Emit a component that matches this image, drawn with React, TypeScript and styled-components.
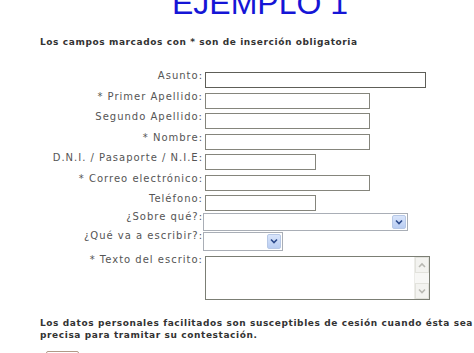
import React from "react";
import styled, { createGlobalStyle } from "styled-components";

const GlobalStyle = createGlobalStyle`
  html, body {
    margin: 0;
    padding: 0;
    background: #ffffff;
    overflow: hidden;
  }
  body {
    font-family: "DejaVu Sans", Verdana, sans-serif;
  }
`;

const Page = styled.div`
  width: 474px;
  height: 353px;
  overflow: hidden;
`;

const Title = styled.h1`
  margin: -13px 0 0 0;
  padding-left: 172px;
  font-family: "Liberation Sans", Arial, sans-serif;
  font-weight: normal;
  font-size: 32px;
  line-height: 32px;
  color: #1515d6;
  white-space: nowrap;
`;

const Note = styled.p<{ $top: number; $width?: number }>`
  margin: ${({ $top }) => $top}px 0 0 40px;
  width: ${({ $width }) => ($width ? `${$width}px` : "auto")};
  font-size: 9px;
  line-height: 12px;
  font-weight: bold;
  letter-spacing: 0.6px;
  color: #333333;
  white-space: ${({ $width }) => ($width ? "normal" : "nowrap")};
`;

const Form = styled.div`
  display: flex;
  flex-direction: column;
  margin-top: 24px;
`;

const Row = styled.div<{ $after: number }>`
  display: grid;
  grid-template-columns: 203px 1fr;
  column-gap: 2px;
  margin-bottom: ${({ $after }) => $after}px;
`;

const Label = styled.label`
  margin-top: -2px;
  text-align: right;
  font-size: 10px;
  line-height: 12px;
  letter-spacing: 1px;
  color: #555555;
  white-space: nowrap;
`;

const TextInput = styled.div<{ $width: number; $dark?: boolean }>`
  box-sizing: border-box;
  width: ${({ $width }) => $width}px;
  height: 16px;
  border: 1px solid ${({ $dark }) => ($dark ? "#5e5e58" : "#85857c")};
  background: #ffffff;
`;

const SelectBox = styled.div<{ $width: number }>`
  box-sizing: border-box;
  display: flex;
  justify-content: flex-end;
  margin-left: -2px;
  width: ${({ $width }) => $width}px;
  height: 18.5px;
  padding: 1px;
  border: 1px solid #a9aeb6;
  background: #ffffff;
`;

const SelectArrow = styled.div`
  box-sizing: border-box;
  display: flex;
  align-items: center;
  justify-content: center;
  width: 14px;
  border: 1px solid #b7c8e6;
  border-radius: 2px;
  background: linear-gradient(#d9e5fb, #b9cdf2);
`;

const TextArea = styled.div`
  box-sizing: border-box;
  display: flex;
  justify-content: flex-end;
  width: 225px;
  height: 44px;
  border: 1px solid #7b7e74;
  background: #ffffff;
`;

const ScrollBar = styled.div`
  display: flex;
  flex-direction: column;
  justify-content: space-between;
  width: 14px;
  background: #f7f7f5;
  border-left: 1px solid #ecece8;
`;

const ScrollButton = styled.div`
  display: flex;
  align-items: center;
  justify-content: center;
  height: 14px;
  border: 1px solid #e2e2dc;
  background: #f3f3f0;
`;

const SubmitButton = styled.div`
  box-sizing: border-box;
  margin: 10px 0 0 46px;
  width: 33px;
  height: 20px;
  border: 1px solid #b19a88;
  border-radius: 2px;
  background: #ffffff;
`;

const Chevron = ({ up, color }: { up?: boolean; color: string }) => (
  <svg width="8" height="6" viewBox="0 0 8 6">
    <path
      d={up ? "M1 5 L4 2 L7 5" : "M1 1.5 L4 4.5 L7 1.5"}
      fill="none"
      stroke={color}
      strokeWidth="1.6"
    />
  </svg>
);

const Select = ({ width }: { width: number }) => (
  <SelectBox $width={width}>
    <SelectArrow>
      <Chevron color="#2c4a8c" />
    </SelectArrow>
  </SelectBox>
);

const fields: { label: string; width: number; after: number; dark?: boolean }[] = [
  { label: "Asunto:", width: 221, after: 4.5, dark: true },
  { label: "* Primer Apellido:", width: 165, after: 4.5 },
  { label: "Segundo Apellido:", width: 165, after: 4.5 },
  { label: "* Nombre:", width: 165, after: 4.5 },
  { label: "D.N.I. / Pasaporte / N.I.E:", width: 111, after: 4.5 },
  { label: "* Correo electrónico:", width: 165, after: 4.5 },
  { label: "Teléfono:", width: 111, after: 1.5 },
];

const App = () => (
  <Page>
    <GlobalStyle />
    <Title>EJEMPLO 1</Title>
    <Note $top={17}>Los campos marcados con * son de inserción obligatoria</Note>
    <Form>
      {fields.map((f) => (
        <Row key={f.label} $after={f.after}>
          <Label>{f.label}</Label>
          <TextInput $width={f.width} $dark={f.dark} />
        </Row>
      ))}
      <Row $after={1}>
        <Label>¿Sobre qué?:</Label>
        <Select width={205} />
      </Row>
      <Row $after={5}>
        <Label>¿Qué va a escribir?:</Label>
        <Select width={80} />
      </Row>
      <Row $after={0}>
        <Label>* Texto del escrito:</Label>
        <TextArea>
          <ScrollBar>
            <ScrollButton>
              <Chevron up color="#b8b8b2" />
            </ScrollButton>
            <ScrollButton>
              <Chevron color="#b8b8b2" />
            </ScrollButton>
          </ScrollBar>
        </TextArea>
      </Row>
    </Form>
    <Note $top={17} $width={440}>
      Los datos personales facilitados son susceptibles de cesión cuando ésta
      sea precisa para tramitar su contestación.
    </Note>
    <SubmitButton />
  </Page>
);

export default App;
